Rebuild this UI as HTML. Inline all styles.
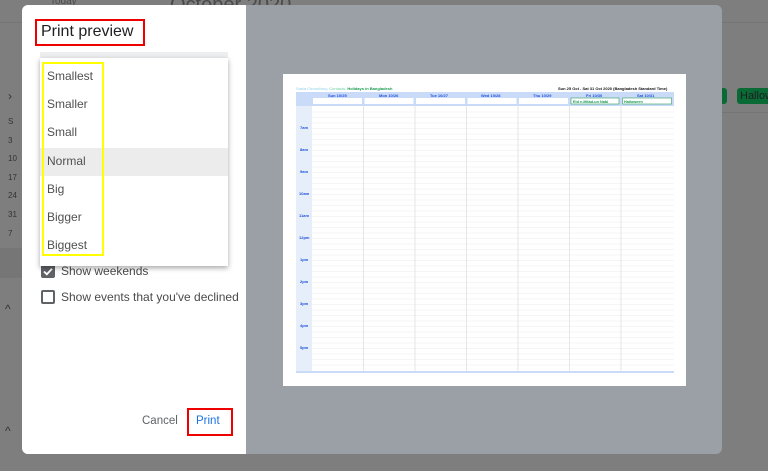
<!DOCTYPE html>
<html><head><style>
*{margin:0;padding:0;box-sizing:border-box}
body{width:768px;height:471px;overflow:hidden;background:#7e7e7e;font-family:"Liberation Sans",sans-serif;position:relative}
.abs{position:absolute}
.t{color:#4a4a4a;font-size:12px}
</style></head><body>
<div class="abs" style="left:0;top:22px;width:768px;height:1px;background:#747474"></div>
<div class="abs" style="left:170px;top:-6px;font-size:20px;color:#4a4a4a">October 2020</div>
<div class="abs" style="left:50px;top:-4px;font-size:10px;color:#4a4a4a">Today</div>
<div class="abs" style="left:737px;top:88px;width:40px;height:16px;background:#0a6a36;border-radius:3px;color:#1e1e1e;font-size:11px;padding:2px 3px">Hallow</div>
<div class="abs" style="left:705px;top:88px;width:22px;height:16px;background:#0a6a36;border-radius:3px"></div>
<div class="abs" style="left:8px;top:89px;font-size:12px;color:#333">›</div>
<div class="abs t" style="left:8px;top:113px;font-size:8px;color:#333;line-height:18.6px">S<br>3<br>10<br>17<br>24<br>31<br>7</div>
<div class="abs" style="left:5px;top:302px;font-size:12px;color:#333">^</div>
<div class="abs" style="left:5px;top:424px;font-size:12px;color:#333">^</div>
<div class="abs" style="left:722px;top:112px;width:46px;height:1px;background:#747474"></div>
<div class="abs" style="left:0;top:248px;width:22px;height:30px;background:#767676"></div>

<div class="abs" style="left:22px;top:5px;width:700px;height:449px;border-radius:6px;overflow:hidden;background:#9aa0a6">
  <div class="abs" style="left:0;top:0;width:224px;height:449px;background:#fff"></div>
</div>
<div class="abs" style="left:35px;top:19px;width:110px;height:27px;border:2px solid #e00"></div>
<div class="abs" style="left:41px;top:23px;font-size:16px;color:#202124">Print preview</div>
<div class="abs" style="left:40px;top:52px;width:188px;height:6px;background:#eceef0"></div>

<div class="abs" style="left:41px;top:264px;width:14px;height:14px;background:#5f6368;border-radius:2px"></div>
<svg class="abs" style="left:41px;top:264px" width="14" height="14"><path d="M3 7.5l2.8 2.8L11 4.8" stroke="#fff" stroke-width="1.8" fill="none"/></svg>
<div class="abs t" style="left:61px;top:264px">Show weekends</div>
<div class="abs" style="left:41px;top:290px;width:14px;height:14px;border:2px solid #5f6368;border-radius:2px"></div>
<div class="abs t" style="left:61px;top:290px">Show events that you've declined</div>

<div class="abs" style="left:40px;top:58px;width:188px;height:208px;background:#fff;box-shadow:0 2px 5px rgba(0,0,0,.35)">
  <div class="abs" style="left:0;top:90px;width:188px;height:28px;background:#ececec"></div>
  <div class="abs t" style="left:7px;top:4px;line-height:28.2px;color:#505050">Smallest<br>Smaller<br>Small<br>Normal<br>Big<br>Bigger<br>Biggest</div>
</div>
<div class="abs" style="left:42px;top:62px;width:62px;height:194px;border:2px solid #ff0"></div>

<div class="abs" style="left:142px;top:415px;font-size:11.5px;color:#5f6368">Cancel</div>
<div class="abs" style="left:187px;top:408px;width:46px;height:28px;border:2px solid #e00"></div>
<div class="abs" style="left:196px;top:415px;font-size:11.5px;color:#1a73e8">Print</div>

<div class="abs" style="left:283px;top:74px;width:403px;height:312px;background:#fff">
  <div class="abs" style="left:13px;top:12px;font-size:4px;color:#8fd0e8;white-space:nowrap">Sasia Chowdhury, <span style="color:#6fd0a0">Contacts</span>, <b style="color:#1a9a50">Holidays in Bangladesh</b></div>
  <div class="abs" style="left:275px;top:12px;font-size:4px;font-weight:bold;color:#111;white-space:nowrap">Sun 25 Oct - Sat 31 Oct 2020 (Bangladesh Standard Time)</div>
  <div class="abs" style="left:13px;top:18px;width:378px;height:14px;background:#c9dbf8"></div>
  <div class="abs" style="left:13px;top:32px;width:16px;height:266px;background:#e6eef9"></div>
  <div class="abs" style="left:13px;top:297px;width:378px;height:2px;background:#c9dbf8"></div>
  <svg class="abs" style="left:0;top:0" width="403" height="312">
    <g stroke="#ececec" stroke-width="0.6">
    <line x1="29" y1="38" x2="391" y2="38"/><line x1="29" y1="43.5" x2="391" y2="43.5"/><line x1="29" y1="49" x2="391" y2="49"/><line x1="29" y1="54.5" x2="391" y2="54.5"/>
    <line x1="29" y1="60" x2="391" y2="60"/><line x1="29" y1="65.5" x2="391" y2="65.5"/><line x1="29" y1="71" x2="391" y2="71"/><line x1="29" y1="76.5" x2="391" y2="76.5"/>
    <line x1="29" y1="82" x2="391" y2="82"/><line x1="29" y1="87.5" x2="391" y2="87.5"/><line x1="29" y1="93" x2="391" y2="93"/><line x1="29" y1="98.5" x2="391" y2="98.5"/>
    <line x1="29" y1="104" x2="391" y2="104"/><line x1="29" y1="109.5" x2="391" y2="109.5"/><line x1="29" y1="115" x2="391" y2="115"/><line x1="29" y1="120.5" x2="391" y2="120.5"/>
    <line x1="29" y1="126" x2="391" y2="126"/><line x1="29" y1="131.5" x2="391" y2="131.5"/><line x1="29" y1="137" x2="391" y2="137"/><line x1="29" y1="142.5" x2="391" y2="142.5"/>
    <line x1="29" y1="148" x2="391" y2="148"/><line x1="29" y1="153.5" x2="391" y2="153.5"/><line x1="29" y1="159" x2="391" y2="159"/><line x1="29" y1="164.5" x2="391" y2="164.5"/>
    <line x1="29" y1="170" x2="391" y2="170"/><line x1="29" y1="175.5" x2="391" y2="175.5"/><line x1="29" y1="181" x2="391" y2="181"/><line x1="29" y1="186.5" x2="391" y2="186.5"/>
    <line x1="29" y1="192" x2="391" y2="192"/><line x1="29" y1="197.5" x2="391" y2="197.5"/><line x1="29" y1="203" x2="391" y2="203"/><line x1="29" y1="208.5" x2="391" y2="208.5"/>
    <line x1="29" y1="214" x2="391" y2="214"/><line x1="29" y1="219.5" x2="391" y2="219.5"/><line x1="29" y1="225" x2="391" y2="225"/><line x1="29" y1="230.5" x2="391" y2="230.5"/>
    <line x1="29" y1="236" x2="391" y2="236"/><line x1="29" y1="241.5" x2="391" y2="241.5"/><line x1="29" y1="247" x2="391" y2="247"/><line x1="29" y1="252.5" x2="391" y2="252.5"/>
    <line x1="29" y1="258" x2="391" y2="258"/><line x1="29" y1="263.5" x2="391" y2="263.5"/><line x1="29" y1="269" x2="391" y2="269"/><line x1="29" y1="274.5" x2="391" y2="274.5"/>
    <line x1="29" y1="280" x2="391" y2="280"/><line x1="29" y1="285.5" x2="391" y2="285.5"/><line x1="29" y1="291" x2="391" y2="291"/>
    </g>
    <g stroke="#e0e0e0" stroke-width="0.8">
    <line x1="80.5" y1="32" x2="80.5" y2="297"/><line x1="132" y1="32" x2="132" y2="297"/><line x1="183.5" y1="32" x2="183.5" y2="297"/>
    <line x1="235" y1="32" x2="235" y2="297"/><line x1="286.5" y1="32" x2="286.5" y2="297"/><line x1="338" y1="32" x2="338" y2="297"/>
    </g>
    <g fill="#fff"><rect x="30" y="24" width="49" height="6"/><rect x="81.5" y="24" width="49" height="6"/><rect x="133" y="24" width="49" height="6"/><rect x="184.5" y="24" width="49" height="6"/><rect x="236" y="24" width="49" height="6"/></g>
    <g fill="#fff" stroke="#2ea060" stroke-width="0.6"><rect x="288" y="24" width="48" height="6"/><rect x="339.5" y="24" width="49" height="6"/></g>
    <g font-size="4" font-weight="bold" fill="#2050e0" font-family="Liberation Sans">
      <text x="45" y="23">Sun 10/25</text><text x="96" y="23">Mon 10/26</text><text x="147" y="23">Tue 10/27</text><text x="198" y="23">Wed 10/28</text><text x="250" y="23">Thu 10/29</text><text x="303" y="23">Fri 10/30</text><text x="354" y="23">Sat 10/31</text>
      <text x="17" y="55">7am</text><text x="17" y="77">8am</text><text x="17" y="99">9am</text><text x="16" y="121">10am</text><text x="16" y="143">11am</text><text x="16" y="165">12pm</text><text x="17" y="187">1pm</text><text x="17" y="209">2pm</text><text x="17" y="231">3pm</text><text x="17" y="253">4pm</text><text x="17" y="275">5pm</text>
    </g>
    <g font-size="3.8" font-weight="bold" fill="#1a9a50" font-family="Liberation Sans"><text x="290" y="29">Eid e-Milad-un Nabi</text><text x="341" y="29">Halloween</text></g>
  </svg>
</div>
</body></html>
